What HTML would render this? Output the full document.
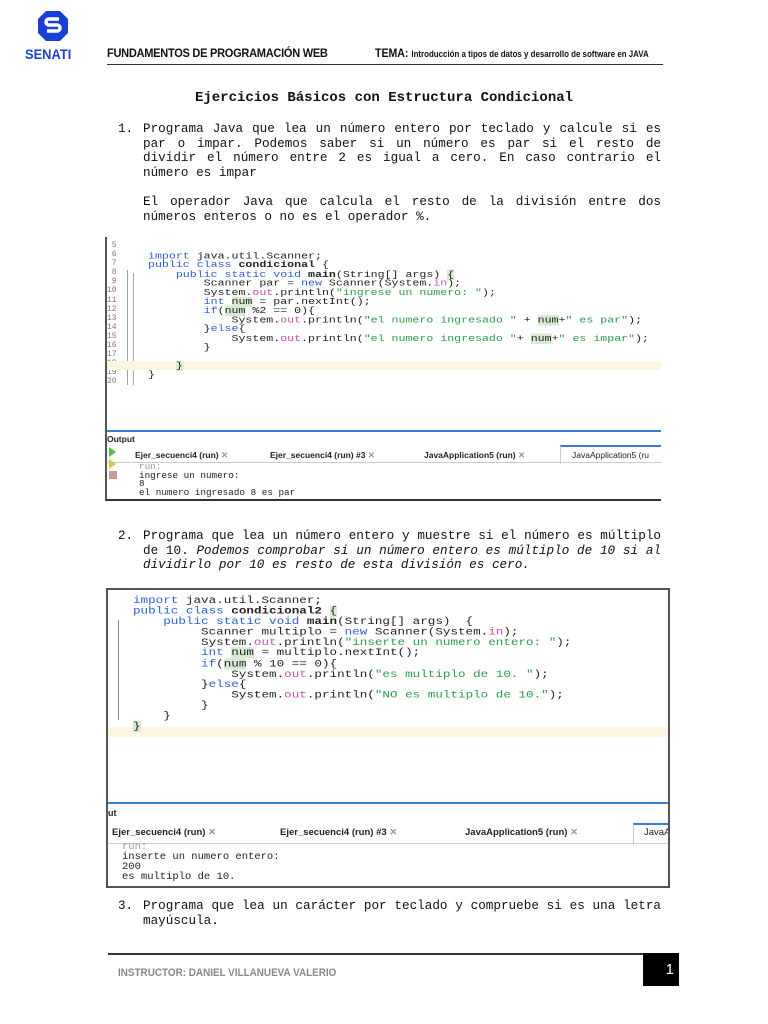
<!DOCTYPE html>
<html><head><meta charset="utf-8"><style>
*{margin:0;padding:0;box-sizing:border-box}
body{width:768px;height:1024px;background:#fff;position:relative;overflow:hidden;font-family:"Liberation Mono",monospace;color:#111}
.a{position:absolute}
.p{position:absolute;left:143px;width:518px;font-size:12.65px;line-height:14.6px;text-align:justify}
.n{position:absolute;left:118px;font-size:12.6px;line-height:14.6px}
.code{font-family:"Liberation Mono",monospace;white-space:pre;color:#222;transform-origin:0 0}
.k{color:#2f5fd0}.s{color:#2c9a4a}.o{color:#c54fb3}.h{background:#d7ead2}
.tab{font-family:"Liberation Sans",sans-serif;font-weight:bold;font-size:8.5px;color:#222}
</style></head><body>
<svg class="a" style="left:37px;top:10px" width="32" height="32" viewBox="0 0 32 32">
<polygon points="9,1 23,1 31,9 31,23 23,31 9,31 1,23 1,9" fill="#1a3fd6"/>
<path d="M22 9H12a3 3 0 0 0 0 6h8a3 3 0 0 1 0 6H10" stroke="#fff" stroke-width="3.5" fill="none"/>
</svg>
<div class="a" style="left:25px;top:46px;font:bold 14px 'Liberation Sans',sans-serif;color:#1a3fd6;transform:scaleX(.92);transform-origin:left">SENATI</div>
<div class="a" style="left:107px;top:46px;font:bold 12px 'Liberation Sans',sans-serif;color:#111;letter-spacing:-.3px;transform:scaleX(.92);transform-origin:left">FUNDAMENTOS DE PROGRAMACIÓN WEB</div>
<div class="a" style="left:375px;top:46px;font:bold 12px 'Liberation Sans',sans-serif;color:#111;white-space:nowrap;transform:scaleX(.88);transform-origin:left">TEMA: <span style="font-size:9px">Introducción a tipos de datos y desarrollo de software en JAVA</span></div>
<div class="a" style="left:107px;top:64px;width:556px;height:1px;background:#333"></div>
<div class="a" style="left:0;width:768px;top:90px;text-align:center;font-size:14px;font-weight:bold">Ejercicios Básicos con Estructura Condicional</div>

<div class="n" style="top:122px">1.</div>
<div class="p" style="top:122px">Programa Java que lea un número entero por teclado y calcule si es par o impar. Podemos saber si un número es par si el resto de dividir el número entre 2 es igual a cero. En caso contrario el número es impar</div>
<div class="p" style="top:195px">El operador Java que calcula el resto de la división entre dos números enteros o no es el operador %.</div>

<div class="a" style="left:105px;top:237px;width:556px;height:264px;background:#fff;border-left:2px solid #555;border-bottom:2px solid #333;overflow:hidden">
 <pre class="a" style="left:0;top:4px;font:8px/9.1px 'Liberation Mono',monospace;color:#777"> 5
 6
 7
 8
 9
10
11
12
13
14
15
16
17
18
19
20</pre>
 <div class="a" style="left:20px;top:33px;width:1px;height:115px;background:#8aa"></div>
 <div class="a" style="left:26px;top:36px;width:1px;height:112px;background:#aaa"></div>
 <div class="a" style="left:0;top:124px;width:556px;height:9px;background:#fbf6e0"></div>
 <pre class="a code" style="left:41px;top:15px;font-size:11.6px;line-height:11.4px;transform:scaleY(.8)"><span class="k">import</span> java.util.Scanner;
<span class="k">public class</span> <b>condicional</b> {
    <span class="k">public static void</span> <b>main</b>(String[] args) <span class="h">{</span>
        Scanner par = <span class="k">new</span> Scanner(System.<span class="o">in</span>);
        System.<span class="o">out</span>.println(<span class="s">"ingrese un numero: "</span>);
        <span class="k">int</span> <span class="h">num</span> = par.nextInt();
        <span class="k">if</span>(<span class="h">num</span> %2 == 0){
            System.<span class="o">out</span>.println(<span class="s">"el numero ingresado "</span> + <span class="h">num</span>+<span class="s">" es par"</span>);
        }<span class="k">else</span>{
            System.<span class="o">out</span>.println(<span class="s">"el numero ingresado "</span>+ <span class="h">num</span>+<span class="s">" es impar"</span>);
        }

    <span class="h">}</span>
}</pre>
 <div class="a" style="left:0;top:193px;width:556px;height:2px;background:#3a7bd5"></div>
 <div class="a tab" style="left:0;top:197px">Output</div>
 <div class="a" style="left:0;top:208px;width:556px;height:18px;border-bottom:1px solid #ccc"></div>
 <div class="a tab" style="left:28px;top:213px">Ejer_secuenci4 (run) <span style="color:#999">✕</span></div>
 <div class="a tab" style="left:163px;top:213px">Ejer_secuenci4 (run) #3 <span style="color:#999">✕</span></div>
 <div class="a tab" style="left:317px;top:213px">JavaApplication5 (run) <span style="color:#999">✕</span></div>
 <div class="a" style="left:453px;top:208px;width:110px;height:19px;border-top:2px solid #3a7bd5;border-left:1px solid #ccc"></div>
 <div class="a tab" style="left:465px;top:213px;font-weight:normal">JavaApplication5 (ru</div>
 <div class="a" style="left:2px;top:210px;width:0;height:0;border-left:7px solid #4c4;border-top:5px solid transparent;border-bottom:5px solid transparent"></div>
 <div class="a" style="left:2px;top:222px;width:0;height:0;border-left:7px solid #cc4;border-top:5px solid transparent;border-bottom:5px solid transparent"></div>
 <div class="a" style="left:2px;top:234px;width:8px;height:8px;background:#c99"></div>
 <pre class="a code" style="left:32px;top:226px;font-size:9.3px;line-height:8.7px"><span style="color:#999">run:</span>
ingrese un numero:
8
el numero ingresado 8 es par</pre>
</div>

<div class="n" style="top:529px">2.</div>
<div class="p" style="top:529px">Programa que lea un número entero y muestre si el número es múltiplo de 10. <i>Podemos comprobar si un número entero es múltiplo de 10 si al dividirlo por 10 es resto de esta división es cero.</i></div>

<div class="a" style="left:106px;top:588px;width:564px;height:300px;border:2px solid #555;background:#fff;overflow:hidden">
 <div class="a" style="left:0;top:137px;width:564px;height:10px;background:#fbf6e0"></div>
 <div class="a" style="left:10px;top:30px;width:1px;height:100px;background:#888"></div>
 <pre class="a code" style="left:25px;top:6px;font-size:12.6px;line-height:13.1px;transform:scaleY(.8)"><span class="k">import</span> java.util.Scanner;
<span class="k">public class</span> <b>condicional2</b> <span class="h">{</span>
    <span class="k">public static void</span> <b>main</b>(String[] args)  {
         Scanner multiplo = <span class="k">new</span> Scanner(System.<span class="o">in</span>);
         System.<span class="o">out</span>.println(<span class="s">"inserte un numero entero: "</span>);
         <span class="k">int</span> <span class="h">num</span> = multiplo.nextInt();
         <span class="k">if</span>(<span class="h">num</span> % 10 == 0){
             System.<span class="o">out</span>.println(<span class="s">"es multiplo de 10. "</span>);
         }<span class="k">else</span>{
             System.<span class="o">out</span>.println(<span class="s">"NO es multiplo de 10."</span>);
         }
    }
<span class="h">}</span></pre>
 <div class="a" style="left:0;top:212px;width:564px;height:2px;background:#3a7bd5"></div>
 <div class="a tab" style="left:0;top:218px;font-size:9px">ut</div>
 <div class="a" style="left:0;top:232px;width:564px;height:22px;border-bottom:1px solid #ccc"></div>
 <div class="a tab" style="left:4px;top:237px;font-size:9.5px">Ejer_secuenci4 (run) <span style="color:#999">✕</span></div>
 <div class="a tab" style="left:172px;top:237px;font-size:9.5px">Ejer_secuenci4 (run) #3 <span style="color:#999">✕</span></div>
 <div class="a tab" style="left:357px;top:237px;font-size:9.5px">JavaApplication5 (run) <span style="color:#999">✕</span></div>
 <div class="a" style="left:525px;top:233px;width:50px;height:22px;border-top:2px solid #3a7bd5;border-left:1px solid #ccc"></div>
 <div class="a tab" style="left:536px;top:237px;font-size:9.5px;font-weight:normal">JavaA</div>
 <pre class="a code" style="left:14px;top:252px;font-size:10.5px;line-height:10px"><span style="color:#999">run:</span>
inserte un numero entero:
200
es multiplo de 10.</pre>
</div>

<div class="n" style="top:899px">3.</div>
<div class="p" style="top:899px">Programa que lea un carácter por teclado y compruebe si es una letra mayúscula.</div>

<div class="a" style="left:108px;top:953px;width:550px;height:2px;background:#333"></div>
<div class="a" style="left:118px;top:967px;font:bold 11px 'Liberation Sans',sans-serif;color:#888;transform:scaleX(.9);transform-origin:left">INSTRUCTOR: DANIEL VILLANUEVA VALERIO</div>
<div class="a" style="left:643px;top:953px;width:36px;height:33px;background:#000;color:#fff;font:15px 'Liberation Sans',sans-serif;text-align:right;padding:8px 5px 0 0">1</div>
</body></html>
